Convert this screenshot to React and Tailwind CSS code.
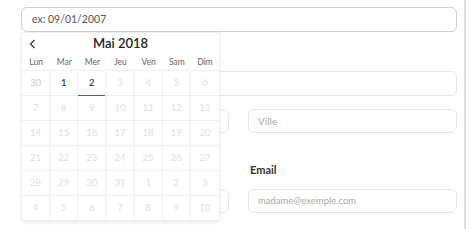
import React from "react";

const days = ["Lun", "Mar", "Mer", "Jeu", "Ven", "Sam", "Dim"];
const cells = [
  "30","1","2","3","4","5","6",
  "7","8","9","10","11","12","13",
  "14","15","16","17","18","19","20",
  "21","22","23","24","25","26","27",
  "28","29","30","31","1","2","3",
  "4","5","6","7","8","9","10",
];

function Cell({ v, i }) {
  const dark = i === 1 || i === 2;
  const first = i === 0;
  return (
    <div
      className={
        "relative flex items-center justify-center h-[25px] border-r border-b border-[#efefef] text-[9.5px] " +
        (dark ? "text-[#222]" : first ? "text-[#cacaca]" : "text-[#e0e0e0]") +
        (i % 7 === 6 ? " border-r-0" : "")
      }
    >
      {v}
      {i === 2 && <div className="absolute left-0 right-0 bottom-[-1px] h-[1px] bg-[#a0414a]" />}
    </div>
  );
}

export default function App() {
  return (
    <div
      className="w-[474px] h-[229px] bg-white overflow-hidden relative"
      style={{ fontFamily: "Lato, 'Noto Sans', sans-serif" }}
    >
      <div className="w-[466px] h-[229px] border-r-2 border-[#dedede] pl-[21px] pt-[7px]">
        <div className="w-[436px] h-[25px] border border-[#cfcfcf] rounded-[6px] flex items-center pl-[10px] text-[10.5px] text-[#555]">
          ex: 09/01/2007
        </div>
        <div className="w-[436px] h-[25px] mt-[39px] border border-[#e6e6e6] rounded-[6px]" />
        <div className="flex gap-[19px] mt-[13px]">
          <div className="w-[208px] h-[24px] border border-[#e6e6e6] rounded-[6px]" />
          <div className="w-[209px] h-[24px] border border-[#e6e6e6] rounded-[6px] flex items-center pl-[9px] text-[10px] text-[#aaa]">
            Ville
          </div>
        </div>
        <div className="flex gap-[19px] mt-[30px]">
          <div className="w-[208px]" />
          <div className="w-[209px] pl-[2px] text-[11px] font-bold text-[#333] leading-[14px]">Email</div>
        </div>
        <div className="flex gap-[19px] mt-[12px]">
          <div className="w-[208px] h-[24px] border border-[#e6e6e6] rounded-[6px]" />
          <div className="w-[209px] h-[24px] border border-[#e6e6e6] rounded-[6px] flex items-center pl-[9px] text-[9.5px] text-[#aaa]">
            madame@exemple.com
          </div>
        </div>
      </div>

      <div className="absolute left-[21px] top-[32px] w-[199px] bg-white border border-[#efefef] rounded-b-[5px] shadow-[0_1px_4px_rgba(0,0,0,0.06)]">
        <div className="relative h-[21px] flex items-center justify-center">
          <svg className="absolute left-[7px] top-[6px]" width="7" height="10" viewBox="0 0 7 10">
            <path d="M5.5 1 L1.5 5 L5.5 9" fill="none" stroke="#333" strokeWidth="1.2" />
          </svg>
          <span className="text-[13px] font-semibold text-[#222] mt-[1px]">Mai 2018</span>
        </div>
        <div className="grid grid-cols-7 h-[16px] items-center">
          {days.map((d) => (
            <div key={d} className="text-center text-[8.5px] text-[#666]">{d}</div>
          ))}
        </div>
        <div className="grid grid-cols-7 border-t border-[#efefef]">
          {cells.map((v, i) => (
            <Cell key={i} v={v} i={i} />
          ))}
        </div>
      </div>
    </div>
  );
}
